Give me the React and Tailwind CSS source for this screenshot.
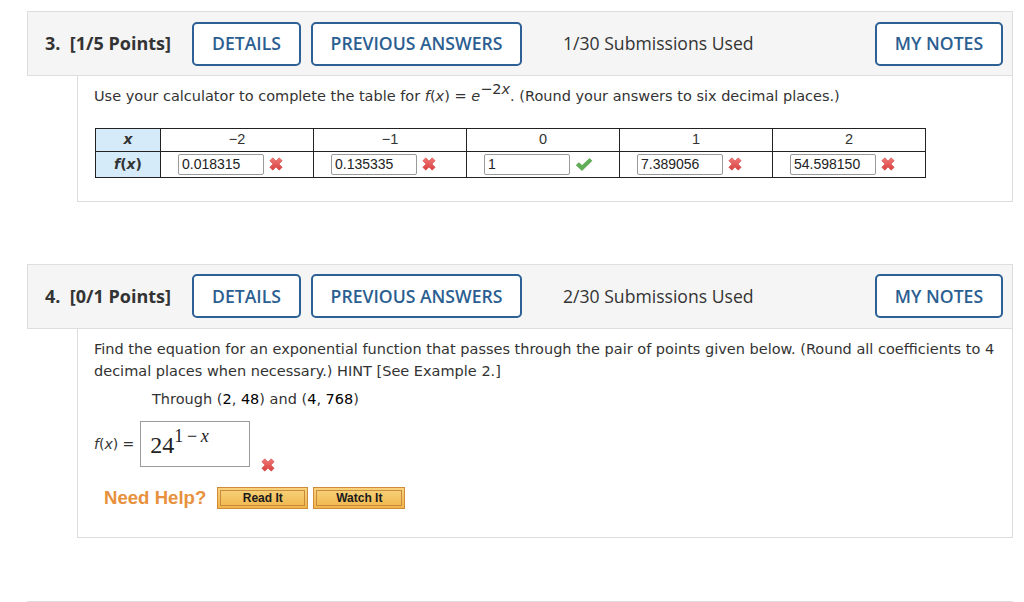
import React from "react";

const BLUE = "text-[#2b5e91]";

function XMark({ className = "" }) {
  return (
    <svg viewBox="0 0 16 16" width="16" height="16" className={className}>
      <defs>
        <linearGradient id="xg" x1="0" y1="0" x2="0" y2="1">
          <stop offset="0" stopColor="#f07a78" />
          <stop offset="1" stopColor="#d9403f" />
        </linearGradient>
      </defs>
      <path
        d="M1.8 4.8 L4.8 1.8 L8 5 L11.2 1.8 L14.2 4.8 L11 8 L14.2 11.2 L11.2 14.2 L8 11 L4.8 14.2 L1.8 11.2 L5 8 Z"
        fill="url(#xg)"
        stroke="#d24a48"
        strokeWidth="0.6"
        strokeLinejoin="round"
      />
    </svg>
  );
}

function Check({ className = "" }) {
  return (
    <svg viewBox="0 0 18 15" width="18" height="15" className={className}>
      <path
        d="M1.2 8.2 L4 5.6 L7 8.6 L14.6 1.4 L17 3.8 L7 13.6 Z"
        fill="#5fae55"
        stroke="#4f9a46"
        strokeWidth="0.6"
        strokeLinejoin="round"
      />
    </svg>
  );
}

function Header({ num, pts, used }) {
  return (
    <div className="flex h-[65px] items-center border border-[#dedede] bg-[#f5f5f5] pl-[17px] pr-[9px] font-['Open_Sans',sans-serif] text-[#333]">
      <div className="w-[147px] text-[18px] font-bold">
        {num}.&nbsp; [{pts} Points]
      </div>
      <button className={`h-[44px] w-[109px] rounded-[5px] border-2 border-[#2d6094] bg-white text-[17.6px] font-semibold ${BLUE}`}>
        DETAILS
      </button>
      <button className={`ml-[10px] h-[44px] w-[211px] rounded-[5px] border-2 border-[#2d6094] bg-white text-[17.6px] font-semibold ${BLUE}`}>
        PREVIOUS ANSWERS
      </button>
      <div className="ml-[41px] text-[17.6px] text-[#333]">{used}/30 Submissions Used</div>
      <button className={`ml-auto h-[44px] w-[128px] rounded-[5px] border-2 border-[#2d6094] bg-white text-[17.6px] font-semibold ${BLUE}`}>
        MY NOTES
      </button>
    </div>
  );
}

function AnsCell({ value, ok }) {
  return (
    <td className="h-[26px] border border-[#222] pl-[17px] align-middle">
      <div className="flex items-center">
        <div className="flex h-[21px] w-[86px] items-center rounded-[2px] border border-[#9a9a9a] bg-white pl-[3px] font-['Liberation_Sans',sans-serif] text-[14px] text-[#222]">
          {value}
        </div>
        {ok ? <Check className="ml-[5px]" /> : <XMark className="ml-[4px]" />}
      </div>
    </td>
  );
}

export default function App() {
  const cols = ["\u22122", "\u22121", "0", "1", "2"];
  const vals = [
    ["0.018315", false],
    ["0.135335", false],
    ["1", true],
    ["7.389056", false],
    ["54.598150", false],
  ];
  return (
    <div className="h-[602px] w-[1024px] overflow-hidden bg-white">
      <div className="pl-[27px] pr-[11px] pt-[11px]">
        <Header num="3" pts="1/5" used="1" />
        <div className="ml-[50px] border-b border-l border-r border-[#dcdcdc] pb-[23px] pl-[16px] pt-[9px] font-['DejaVu_Sans',sans-serif] text-[14.5px] text-[#333]">
          <div className="leading-[22px]">
            Use your calculator to complete the table for <i>f</i>(<i>x</i>) = <i>e</i>
            <sup className="text-[14.5px] not-italic">
              {"\u2212"}2<i>x</i>
            </sup>
            . (Round your answers to six decimal places.)
          </div>
          <table className="ml-[1px] mt-[21px] border-collapse border-[1.5px] border-[#222]">
            <tbody>
              <tr>
                <td className="h-[22px] w-[65px] border border-[#222] bg-[#d6ebfa] text-center text-[14px] font-bold italic text-[#333]">
                  x
                </td>
                {cols.map((c) => (
                  <td
                    key={c}
                    className="h-[22px] w-[153px] border border-[#222] text-center font-['Liberation_Sans',sans-serif] text-[14.5px] text-[#333]"
                  >
                    {c}
                  </td>
                ))}
              </tr>
              <tr>
                <td className="h-[26px] w-[65px] border border-[#222] bg-[#d6ebfa] text-center text-[14px] font-bold text-[#333]">
                  <i>f</i>(<i>x</i>)
                </td>
                {vals.map(([v, ok]) => (
                  <AnsCell key={v} value={v} ok={ok} />
                ))}
              </tr>
            </tbody>
          </table>
        </div>

        <div className="mt-[62px]">
          <Header num="4" pts="0/1" used="2" />
        </div>
        <div className="ml-[50px] border-b border-l border-r border-[#dcdcdc] pb-[25px] pl-[16px] pt-[9px] font-['DejaVu_Sans',sans-serif] text-[14.5px] text-[#333]">
          <div className="pr-[10px] leading-[22px]">
            Find the equation for an exponential function that passes through the pair of points given below. (Round all
            coefficients to 4 decimal places when necessary.) HINT [See Example 2.]
          </div>
          <div className="mt-[6px] pl-[58px] leading-[22px]">
            Through (<span className="text-black">2</span>, <span className="text-black">48</span>) and (
            <span className="text-black">4</span>, <span className="text-black">768</span>)
          </div>
          <div className="mt-[11px] flex items-end">
            <div className="mb-[12px] text-[14px] text-[#333]">
              <i>f</i>(<i>x</i>) =
            </div>
            <div className="ml-[6px] flex h-[46px] w-[110px] items-start border border-[#9a9a9a] bg-white pl-[9px] pt-[10px] font-['Liberation_Serif',serif] text-[#222]">
              <span className="text-[24px] leading-[26px]">24</span>
              <span className="-mt-[6px] text-[18px] leading-[20px]">
                1{"\u2009\u2212\u2009"}
                <i>x</i>
              </span>
            </div>
            <XMark className="mb-[-6px] ml-[10px]" />
          </div>
          <div className="mt-[17px] flex items-center">
            <div className="ml-[10px] font-['Liberation_Sans',sans-serif] text-[18.6px] font-bold text-[#e8913c]">
              Need Help?
            </div>
            <button className="ml-[11px] flex h-[22px] w-[91px] items-center justify-center border border-[#cf8a3a] bg-gradient-to-b from-[#f8d37c] to-[#f0b54a] p-[2px]">
              <span className="flex h-full w-full items-center justify-center border border-[#c98a3e] font-['Liberation_Sans',sans-serif] text-[12px] font-bold text-[#1a1a1a]">
                Read It
              </span>
            </button>
            <button className="ml-[5px] flex h-[22px] w-[92px] items-center justify-center border border-[#cf8a3a] bg-gradient-to-b from-[#f8d37c] to-[#f0b54a] p-[2px]">
              <span className="flex h-full w-full items-center justify-center border border-[#c98a3e] font-['Liberation_Sans',sans-serif] text-[12px] font-bold text-[#1a1a1a]">
                Watch It
              </span>
            </button>
          </div>
        </div>

        <div className="mt-[63px]">
          <div className="h-[65px] border border-[#dedede] bg-[#f5f5f5]" />
        </div>
      </div>
    </div>
  );
}
